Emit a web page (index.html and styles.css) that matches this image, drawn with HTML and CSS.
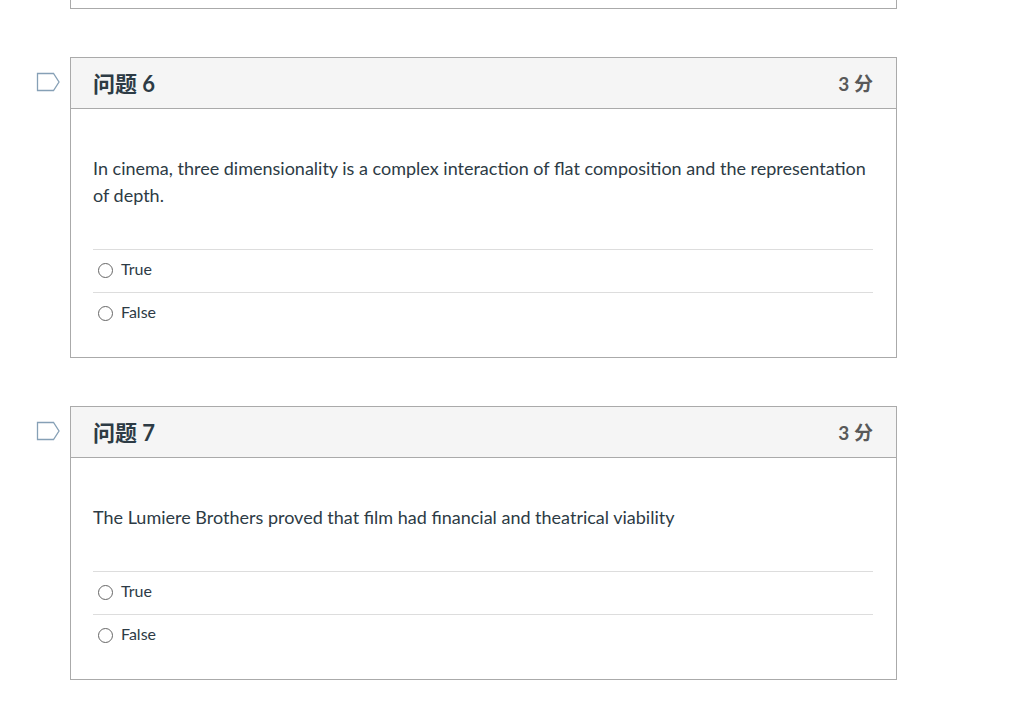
FILE: index.html
```
<!DOCTYPE html>
<html lang="zh-CN">
<head>
    <meta charset="UTF-8">
    <meta name="viewport" content="width=device-width, initial-scale=1.0">
    <title>问题</title>
    <link rel="stylesheet" href="styles.css">
</head>
<body>
    <form class="questions">
        <div class="question question-end"></div>

        <section class="question">
            <button type="button" class="flag" aria-label="标记问题 6">
                <svg width="24" height="20" viewBox="0 0 24 20"><path d="M1.5 1.5H17.5L23 10L17.5 18.5H1.5Z"/></svg>
            </button>
            <div class="header">
                <h2 class="name">问题 6</h2>
                <span class="points">3 分</span>
            </div>
            <div class="text">
                <p class="question-text" id="q6">In cinema, three dimensionality is a complex interaction of flat composition and the representation of depth.</p>
                <div class="answers" role="radiogroup" aria-labelledby="q6">
                    <label class="answer"><input type="radio" name="question_6" value="true"><span>True</span></label>
                    <label class="answer"><input type="radio" name="question_6" value="false"><span>False</span></label>
                </div>
            </div>
        </section>

        <section class="question">
            <button type="button" class="flag" aria-label="标记问题 7">
                <svg width="24" height="20" viewBox="0 0 24 20"><path d="M1.5 1.5H17.5L23 10L17.5 18.5H1.5Z"/></svg>
            </button>
            <div class="header">
                <h2 class="name">问题 7</h2>
                <span class="points">3 分</span>
            </div>
            <div class="text">
                <p class="question-text" id="q7">The Lumiere Brothers proved that film had financial and theatrical viability</p>
                <div class="answers" role="radiogroup" aria-labelledby="q7">
                    <label class="answer"><input type="radio" name="question_7" value="true"><span>True</span></label>
                    <label class="answer"><input type="radio" name="question_7" value="false"><span>False</span></label>
                </div>
            </div>
        </section>
    </form>
</body>
</html>
```
FILE: styles.css
```
* {
    box-sizing: border-box;
}
body {
    margin: 0;
    background-color: #fff;
    color: #2d3b45;
    font-family: Lato, "Noto Sans CJK SC", sans-serif;
    font-size: 18px;
    line-height: 27px;
}
.questions {
    display: flex;
    flex-direction: column;
    gap: 48px;
    padding: 0 127px 46px 70px;
}
.question {
    position: relative;
    border: 1px solid #aaa;
}
/* bottom edge of the question above */
.question-end {
    height: 9px;
    border-top: none;
}
/* bookmark that hangs outside the box */
.flag {
    position: absolute;
    top: 14px;
    left: -35px;
    padding: 0;
    border: none;
    background: none;
    cursor: pointer;
}
.flag svg {
    display: block;
    fill: #fff;
    stroke: #86a0b6;
    stroke-width: 1.3;
}
.header {
    display: flex;
    align-items: center;
    justify-content: space-between;
    height: 51px;
    padding: 0 23px 0 22px;
    background-color: #f5f5f5;
    border-bottom: 1px solid #aaa;
}
.name {
    margin: 0;
    font-size: 22px;
    font-weight: bold;
}
.points {
    color: #595959;
    font-size: 19px;
    font-weight: bold;
}
.text {
    padding: 46px 23px 22px 22px;
}
.question-text {
    margin: 0 0 40px;
}
.answer {
    display: flex;
    align-items: center;
    height: 43px;
    padding: 0 0 4px 5px;
    border-top: 1px solid #ddd;
    font-size: 16px;
    line-height: 24px;
    cursor: pointer;
}
.answer input {
    appearance: none;
    width: 15px;
    height: 15px;
    margin: 3px 8px 0 0;
    border: 1px solid #666;
    border-radius: 50%;
    background-color: #fff;
}
.answer input:checked {
    border: 4px solid #0374b5;
}
```
